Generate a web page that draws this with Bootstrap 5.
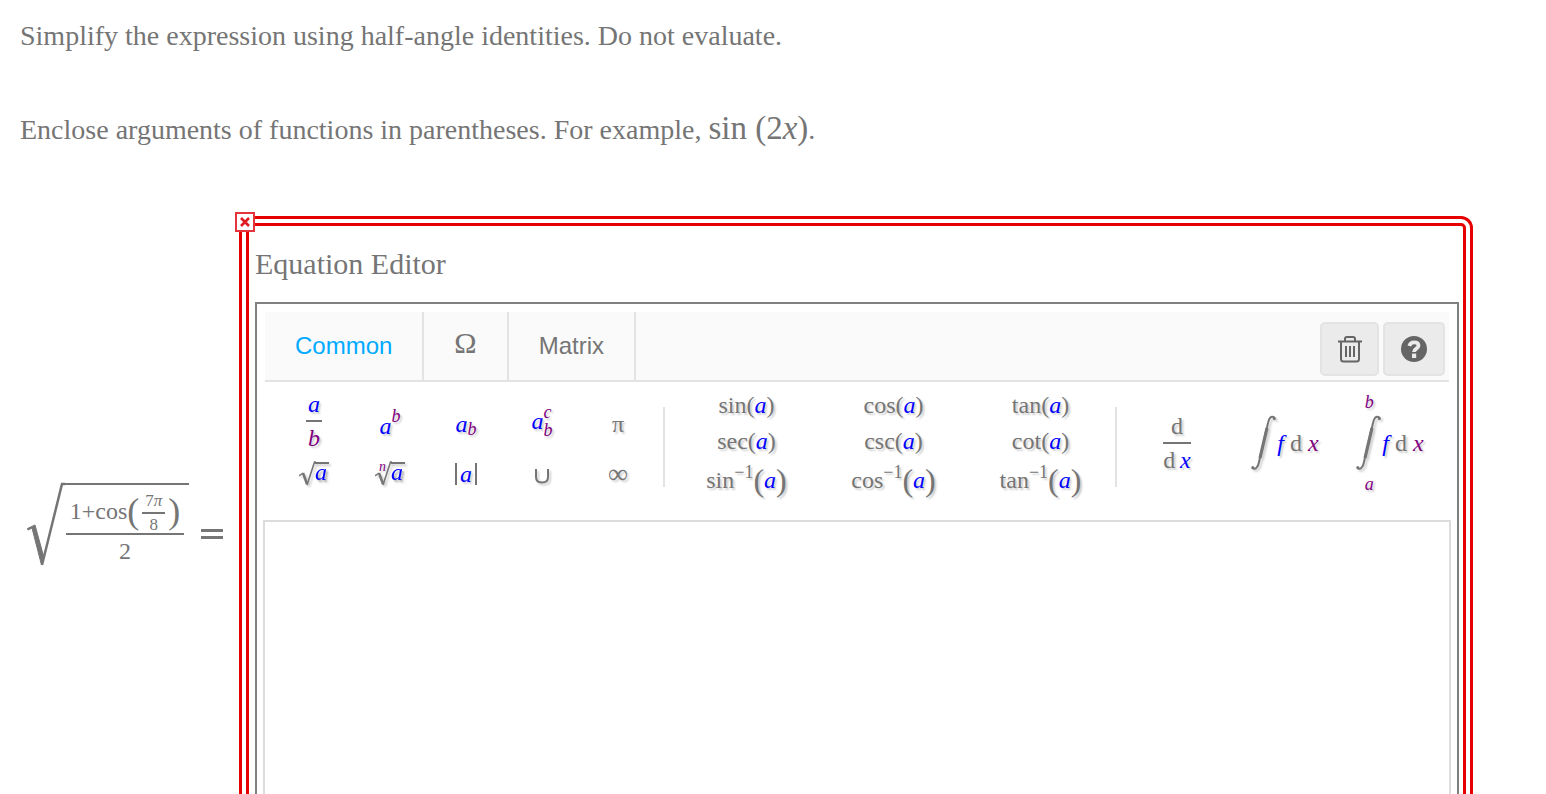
<!DOCTYPE html>
<html lang="en">
<head>
<meta charset="utf-8">
<meta name="viewport" content="width=device-width, initial-scale=1">
<title>Equation Editor</title>
<link href="https://cdn.jsdelivr.net/npm/bootstrap@5.3.0/dist/css/bootstrap.min.css" rel="stylesheet">
<style>
  body { font-family: "Liberation Serif", serif; color: #757575; font-size: 28px; line-height: 32px; background: #fff; }
  .page { padding: 20px 73px 0 20px; }
  .prompt { margin-bottom: 62px; }
  .sample { font-size: 33px; line-height: 24px; }
  i { font-style: italic; }
  .question { margin-top: 70px; }

  /* the expression on the left */
  .expr { font-size: 24px; line-height: 24px; width: 219px; padding-left: 7px; }
  .root { padding-bottom: 20px; }
  .root .body { border-top: 2px solid #757575; width: 124px; margin-top: 1px; padding: 0 5px 0 1px; }
  .numer { height: 50px; border-bottom: 2px solid #757575; padding-top: 4px; }
  .paren { font-size: 36px; line-height: 36px; }
  .tiny { font-size: 17px; line-height: 16px; margin: 4px 3px 0; }
  .tiny .top { border-bottom: 2px solid #757575; padding: 0 3px 3px; }
  .tiny .bottom { padding-top: 3px; }
  .equals { width: 22px; height: 10px; border: solid #757575; border-width: 3px 0; margin-left: 12px; }

  /* editor frame */
  .editor { border: 10px double #e60000; border-radius: 12px; padding: 20px 4px 4px 6px; }
  .close-box { left: -14px; top: -14px; width: 20px; height: 20px; background: #fff; border: 2px solid #e4343c; }
  .title { font-size: 30px; line-height: 36px; margin: 0 0 20px; }
  .inner { border: 2px solid #808080; padding: 8px 6px 8px; }
  .tools { background: #fafafa; border-bottom: 2px solid #e3e3e3; margin: 0 2px; height: 70px; padding-right: 4px; }
  .tab { border: 0; border-right: 2px solid #e3e3e3; background: transparent; color: #757575; padding: 0 30px; font: 24px/28px "Liberation Sans", Arial, sans-serif; }
  .tab.active { color: #00aaff; }
  .tab.omega { font: 30px/34px "Liberation Serif", serif; padding-bottom: 6px; }
  .tool-set { padding-top: 6px; }
  .tool { width: 59px; height: 54px; background: #ebebeb; border: 2px solid #e3e3e3; border-radius: 5px; padding: 0; }
  .tool.wide { width: 62px; }
  .tool svg { display: block; margin: 0 auto; }

  /* symbol palette */
  .palette { font-size: 24px; line-height: 24px; height: 138px; margin: 0 2px; }
  .palette button { border: 0; padding: 0; background: transparent; color: #757575; text-shadow: 2px 2px 2px rgba(0,0,0,.2); white-space: nowrap; }
  .palette svg, .palette .overline { filter: drop-shadow(2px 2px 1px rgba(0,0,0,.2)); }
  .basic { display: grid; grid-template-columns: repeat(5, 76px); grid-template-rows: 58px 48px; padding: 10px 7px 0 11px; }
  .palette .low { padding-top: 6px; }
  .trig { display: grid; grid-template-columns: repeat(3, 147px); grid-template-rows: 36px 36px 42px; padding: 5px 1px 0 8px; }
  .rule { width: 2px; height: 80px; margin-top: 25px; background: #e3e3e3; }
  .calc { height: 122px; }
  .calc .deriv { width: 120px; }
  .calc .integral { width: 96px; }
  .calc .definite { width: 114px; }
  .va { color: #0000ff; }
  .vb { color: #800080; }
  .s { font-size: 18px; line-height: 18px; }
  .n { font-size: 14px; line-height: 12px; }
  .up { padding-bottom: 16px; }
  .down { padding-top: 10px; }
  .bar { border-top: 2px solid #757575; }
  .overline { border-top: 2px solid #757575; height: 24px; line-height: 16px; padding: 0 2px 0 0; margin-left: -1px; }
  .tall { font-size: 32px; line-height: 32px; }
  .pipe { width: 2px; height: 22px; background: #757575; }
  .pipes { gap: 3px; }
  .infinity { font-size: 28px; }

  .answer { height: 308px; border: 2px solid #dcdcdc; border-radius: 0; resize: none; background: #fff; display: block; }
</style>
</head>
<body class="vh-100 overflow-hidden">
<main class="page">
  <p class="prompt">Simplify the expression using half-angle identities. Do not evaluate.</p>
  <p class="mb-0">Enclose arguments of functions in parentheses. For example, <span class="sample">sin (2<i>x</i>)</span>.</p>

  <div class="d-flex align-items-center question">
    <div class="expr d-flex align-items-center flex-shrink-0">
      <div class="root d-flex">
        <svg width="38" height="85" viewBox="0 0 38 85" fill="none" stroke="#757575"><path d="M0.500 46.500L8 43L16.500 74L14.500 83L5 46L1 48Z" fill="#757575" stroke-width="1"/><path d="M15 83L35 2H38" stroke-width="2.500"/></svg>
        <div class="body text-center">
          <div class="numer d-flex align-items-center justify-content-center">
            <span>1+cos</span><span class="paren">(</span>
            <span class="tiny d-flex flex-column"><span class="top">7<i>π</i></span><span class="bottom">8</span></span>
            <span class="paren">)</span>
          </div>
          <div class="pt-1">2</div>
        </div>
      </div>
      <div class="equals" role="img" aria-label="equals"></div>
    </div>

    <section class="editor position-relative flex-grow-1">
      <button class="close-box position-absolute p-0 d-flex align-items-center justify-content-center" aria-label="Incorrect"><svg width="12" height="12" viewBox="0 0 12 12"><path d="M2 2L10 10M10 2L2 10" stroke="#e01b24" stroke-width="2.600"/></svg></button>
      <h1 class="title fw-normal">Equation Editor</h1>
      <div class="inner">
        <div class="tools d-flex align-items-center">
          <div class="d-flex align-self-stretch me-auto" role="tablist">
            <button class="tab active" role="tab">Common</button>
            <button class="tab omega" role="tab">Ω</button>
            <button class="tab" role="tab">Matrix</button>
          </div>
          <div class="tool-set d-flex gap-1">
            <button class="tool" aria-label="Delete"><svg width="26" height="28" viewBox="0 0 26 28" fill="none" stroke="#656565" stroke-width="2"><path d="M1 6.500H25M8 6V4Q8 2 10 2H16Q18 2 18 4V6M4 7V24Q4 26.500 6.500 26.500H19.500Q22 26.500 22 24V7M9 11V22M13 11V22M17 11V22"/></svg></button>
            <button class="tool wide" aria-label="Help"><svg width="26" height="26" viewBox="0 0 26 26"><circle cx="13" cy="13" r="13" fill="#656565"/><path d="M8.300 10Q9.500 6.300 13 6.300Q17.500 6.300 17.500 9.600C17.500 12.800 13 12.500 13 16" fill="none" stroke="#ebebeb" stroke-width="3.800"/><path d="M11 17.600H15.200V22H11Z" fill="#ebebeb"/></svg></button>
          </div>
        </div>

        <div class="palette d-flex">
          <div class="basic">
            <button class="d-flex flex-column align-items-center justify-content-center" aria-label="Fraction"><i class="va pb-1">a</i><span class="bar px-2"></span><i class="vb pt-1">b</i></button>
            <button class="low d-flex align-items-center justify-content-center" aria-label="Power"><i class="va pt-1">a</i><i class="vb s up">b</i></button>
            <button class="low d-flex align-items-center justify-content-center" aria-label="Subscript"><i class="va">a</i><i class="vb s down">b</i></button>
            <button class="d-flex align-items-center justify-content-center" aria-label="Subscript and superscript"><i class="va">a</i><span class="vb s d-flex flex-column align-items-start"><i>c</i><i>b</i></span></button>
            <button class="low" aria-label="Pi">π</button>
            <button class="d-flex align-items-center justify-content-center" aria-label="Square root"><svg width="17" height="26" viewBox="0 0 17 26" fill="none" stroke="#757575"><path d="M0 15L4 12" stroke-width="1.500"/><path d="M4 12L8 23" stroke-width="2.500"/><path d="M8 24L15.500 1H17" stroke-width="1.600"/></svg><i class="overline va">a</i></button>
            <button class="d-flex align-items-center justify-content-center" aria-label="Nth root"><span class="position-relative d-flex"><i class="n vb position-absolute top-0 start-0 ps-1">n</i><svg width="17" height="26" viewBox="0 0 17 26" fill="none" stroke="#757575"><path d="M0 15L4 12" stroke-width="1.500"/><path d="M4 12L8 23" stroke-width="2.500"/><path d="M8 24L15.500 1H17" stroke-width="1.600"/></svg></span><i class="overline va">a</i></button>
            <button class="pipes d-flex align-items-center justify-content-center" aria-label="Absolute value"><span class="pipe"></span><i class="va">a</i><span class="pipe"></span></button>
            <button aria-label="Union"><svg width="14" height="15" viewBox="0 0 14 15"><path d="M1 0V8Q1 13.500 7 13.500T13 8V0" fill="none" stroke="#757575" stroke-width="2"/></svg></button>
            <button class="infinity" aria-label="Infinity">∞</button>
          </div>
          <div class="rule"></div>
          <div class="trig">
            <button>sin(<i class="va">a</i>)</button>
            <button>cos(<i class="va">a</i>)</button>
            <button>tan(<i class="va">a</i>)</button>
            <button>sec(<i class="va">a</i>)</button>
            <button>csc(<i class="va">a</i>)</button>
            <button>cot(<i class="va">a</i>)</button>
            <button class="d-flex align-items-center justify-content-center">sin<span class="s up">−1</span><span class="tall">(</span><i class="va">a</i><span class="tall">)</span></button>
            <button class="d-flex align-items-center justify-content-center">cos<span class="s up">−1</span><span class="tall">(</span><i class="va">a</i><span class="tall">)</span></button>
            <button class="d-flex align-items-center justify-content-center">tan<span class="s up">−1</span><span class="tall">(</span><i class="va">a</i><span class="tall">)</span></button>
          </div>
          <div class="rule"></div>
          <div class="calc d-flex align-items-center">
            <button class="deriv d-flex flex-column align-items-center" aria-label="Derivative"><span class="pb-1">d</span><span class="bar pt-1">d&#8201;<i class="va">x</i></span></button>
            <button class="integral d-flex align-items-center justify-content-center" aria-label="Integral"><svg width="26" height="56" viewBox="0 0 26 56" fill="none" stroke="#757575"><path d="M24 3C20 0 18 3 17 8L8 47C7 53 4 55 1 53" stroke-width="2"/><path d="M16 13L9 43" stroke-width="3.200"/><circle cx="23.300" cy="3.500" r="1.500" fill="#757575" stroke="none"/><circle cx="1.800" cy="52.500" r="1.500" fill="#757575" stroke="none"/></svg><span><i class="va">f</i> d <i class="vb">x</i></span></button>
            <button class="definite d-flex align-items-center justify-content-center" aria-label="Definite integral"><span class="d-flex flex-column align-items-center"><i class="vb s">b</i><svg class="my-1" width="26" height="56" viewBox="0 0 26 56" fill="none" stroke="#757575"><path d="M24 3C20 0 18 3 17 8L8 47C7 53 4 55 1 53" stroke-width="2"/><path d="M16 13L9 43" stroke-width="3.200"/><circle cx="23.300" cy="3.500" r="1.500" fill="#757575" stroke="none"/><circle cx="1.800" cy="52.500" r="1.500" fill="#757575" stroke="none"/></svg><i class="vb s">a</i></span><span><i class="va">f</i> d <i class="vb">x</i></span></button>
          </div>
        </div>
        <textarea class="answer w-100" aria-label="Answer"></textarea>
      </div>
    </section>
  </div>
</main>
<script src="https://cdn.jsdelivr.net/npm/bootstrap@5.3.0/dist/js/bootstrap.bundle.min.js"></script>
</body>
</html>
